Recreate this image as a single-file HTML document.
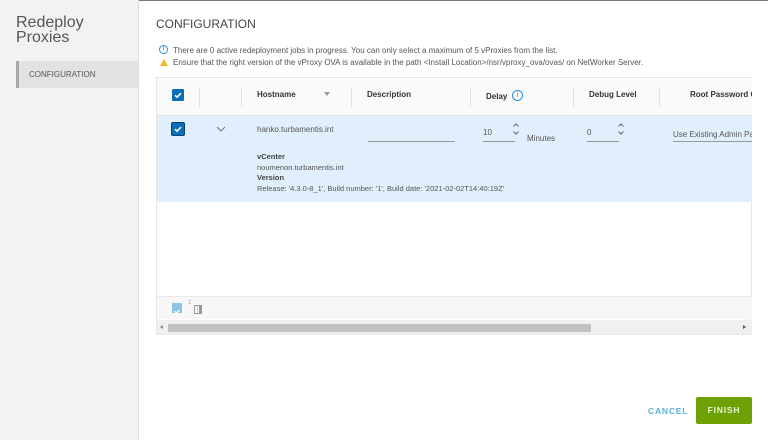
<!DOCTYPE html>
<html><head><style>
*{margin:0;padding:0;box-sizing:border-box}
body{width:768px;height:440px;overflow:hidden;font-family:"Liberation Sans",sans-serif;background:#fff;position:relative;color:#333}
.abs{position:absolute}
.side{left:0;top:0;width:139px;height:440px;background:#f2f2f2;border-right:1px solid #ddd}
.cb{width:12px;height:12px;background:#0b6fb8;border-radius:1px}
.cb svg{display:block}
.hdr{font-size:8px;font-weight:bold;color:#333}
.sep{width:1px;height:20px;background:#e3e3e3;top:87px}
.t8{font-size:8px}
</style></head><body>
<div class="abs" style="left:0;top:0;width:768px;height:1px;background:#777"></div>
<div class="abs side"></div>
<div class="abs" style="left:16px;top:15px;font-size:16px;line-height:15px;color:#555">Redeploy<br>Proxies</div>
<div class="abs" style="left:16px;top:61px;width:122px;height:27px;background:#e2e2e2;border-left:3px solid #aaa"></div>
<div class="abs" style="left:29px;top:70px;font-size:8px;color:#555">CONFIGURATION</div>
<div class="abs" style="left:156px;top:17px;font-size:12px;color:#444">CONFIGURATION</div>
<div class="abs" style="left:159px;top:45px;width:9px;height:9px;border:1px solid #2b8fd6;border-radius:50%;font-size:6px;color:#2b8fd6;text-align:center;line-height:7px;font-weight:bold">i</div>
<div class="abs t8" style="left:173px;top:46px;color:#555">There are 0 active redeployment jobs in progress. You can only select a maximum of 5 vProxies from the list.</div>
<div class="abs" style="left:160px;top:59px;width:0;height:0;border-left:4px solid transparent;border-right:4px solid transparent;border-bottom:7px solid #f3b32b"></div>
<div class="abs t8" style="left:173px;top:58px;color:#555">Ensure that the right version of the vProxy OVA is available in the path &lt;Install Location&gt;/nsr/vproxy_ova/ovas/ on NetWorker Server.</div>

<div class="abs" style="left:156px;top:77px;width:596px;height:258px;border:1px solid #e6e6e6;background:#fff"></div>
<div class="abs" style="left:157px;top:78px;width:595px;height:37px;background:#fafafa"></div>
<div class="abs cb" style="left:172px;top:89px"><svg width="12" height="12"><path d="M3 6.2l2 2 4-4" stroke="#fff" stroke-width="1.5" fill="none"/></svg></div>
<div class="abs sep" style="left:199px"></div><div class="abs sep" style="left:241px"></div>
<div class="abs sep" style="left:351px"></div><div class="abs sep" style="left:470px"></div>
<div class="abs sep" style="left:573px"></div><div class="abs sep" style="left:659px"></div>
<div class="abs hdr" style="left:257px;top:90px">Hostname</div>
<div class="abs" style="left:324px;top:92px;width:0;height:0;border-left:3px solid transparent;border-right:3px solid transparent;border-top:4px solid #999"></div>
<div class="abs hdr" style="left:367px;top:90px">Description</div>
<div class="abs hdr" style="left:486px;top:92px">Delay</div>
<div class="abs" style="left:512px;top:90px;width:11px;height:11px;border:1px solid #2b8fd6;border-radius:50%;font-size:7px;color:#2b8fd6;text-align:center;line-height:9px">i</div>
<div class="abs hdr" style="left:589px;top:90px">Debug Level</div>
<div class="abs hdr" style="left:690px;top:90px;white-space:nowrap;width:62px;overflow:hidden">Root Password C</div>

<div class="abs" style="left:157px;top:115px;width:595px;height:87px;background:#e1effc;border-top:1px solid #d6e4f0"></div>
<div class="abs cb" style="left:172px;top:123px;box-shadow:0 0 0 1px #06416e"><svg width="12" height="12"><path d="M3 6.2l2 2 4-4" stroke="#fff" stroke-width="1.5" fill="none"/></svg></div>
<svg class="abs" style="left:216px;top:126px" width="10" height="6"><path d="M1 1l4 4 4-4" stroke="#777" fill="none"/></svg>
<div class="abs t8" style="left:257px;top:125px;color:#555">hanko.turbamentis.int</div>
<div class="abs" style="left:368px;top:141px;width:87px;height:1px;background:#999"></div>
<div class="abs t8" style="left:483px;top:128px;color:#555">10</div>
<div class="abs" style="left:483px;top:141px;width:32px;height:1px;background:#999"></div>
<svg class="abs" style="left:512px;top:122px" width="8" height="14"><path d="M1.5 4.5l2.5-2.5 2.5 2.5M1.5 9.5l2.5 2.5 2.5-2.5" stroke="#666" fill="none"/></svg>
<div class="abs t8" style="left:527px;top:134px;color:#555">Minutes</div>
<div class="abs t8" style="left:587px;top:128px;color:#555">0</div>
<div class="abs" style="left:587px;top:141px;width:32px;height:1px;background:#999"></div>
<svg class="abs" style="left:617px;top:122px" width="8" height="14"><path d="M1.5 4.5l2.5-2.5 2.5 2.5M1.5 9.5l2.5 2.5 2.5-2.5" stroke="#666" fill="none"/></svg>
<div class="abs t8" style="left:673px;top:130px;color:#555;white-space:nowrap;width:79px;overflow:hidden">Use Existing Admin Pa</div>
<div class="abs" style="left:673px;top:141px;width:79px;height:1px;background:#999"></div>
<div class="abs" style="left:257px;top:152px;font-size:7.5px;line-height:10.5px;color:#555">
<b style="color:#444">vCenter</b><br>noumenon.turbamentis.int<br><b style="color:#444">Version</b><br>Release: '4.3.0-8_1', Build number: '1', Build date: '2021-02-02T14:40:19Z'</div>

<div class="abs" style="left:157px;top:296px;width:595px;height:23px;background:#f7f7f7;border-top:1px solid #e8e8e8"></div>
<div class="abs" style="left:172px;top:303px;width:10px;height:10px;background:#8dc4e8"><svg width="10" height="10"><path d="M2.5 5l2 2 3-3" stroke="#fff" stroke-width="1.2" fill="none"/></svg></div>
<div class="abs" style="left:188px;top:300px;font-size:6px;color:#aaa">1</div>
<div class="abs" style="left:194px;top:305px;width:8px;height:9px;border:1px solid #999;background:linear-gradient(90deg,#fff 30%,#999 30%,#999 45%,#fff 45%,#fff 65%,#999 65%)"></div>
<div class="abs" style="left:157px;top:320px;width:595px;height:14px;background:#f0f0f0"></div>
<div class="abs" style="left:168px;top:324px;width:423px;height:8px;background:#c1c1c1"></div>
<div class="abs" style="left:160px;top:325px;width:0;height:0;border-top:2.5px solid transparent;border-bottom:2.5px solid transparent;border-right:3px solid #888"></div>
<div class="abs" style="left:743px;top:325px;width:0;height:0;border-top:2.5px solid transparent;border-bottom:2.5px solid transparent;border-left:3px solid #555"></div>

<div class="abs" style="left:648px;top:406px;font-size:8.5px;font-weight:bold;letter-spacing:.8px;color:#5bb0de">CANCEL</div>
<div class="abs" style="left:696px;top:397px;width:56px;height:27px;background:#6ea204;border-radius:2px;color:#e9f3d6;font-size:8.5px;font-weight:bold;letter-spacing:.8px;text-align:center;line-height:27px">FINISH</div>
</body></html>
